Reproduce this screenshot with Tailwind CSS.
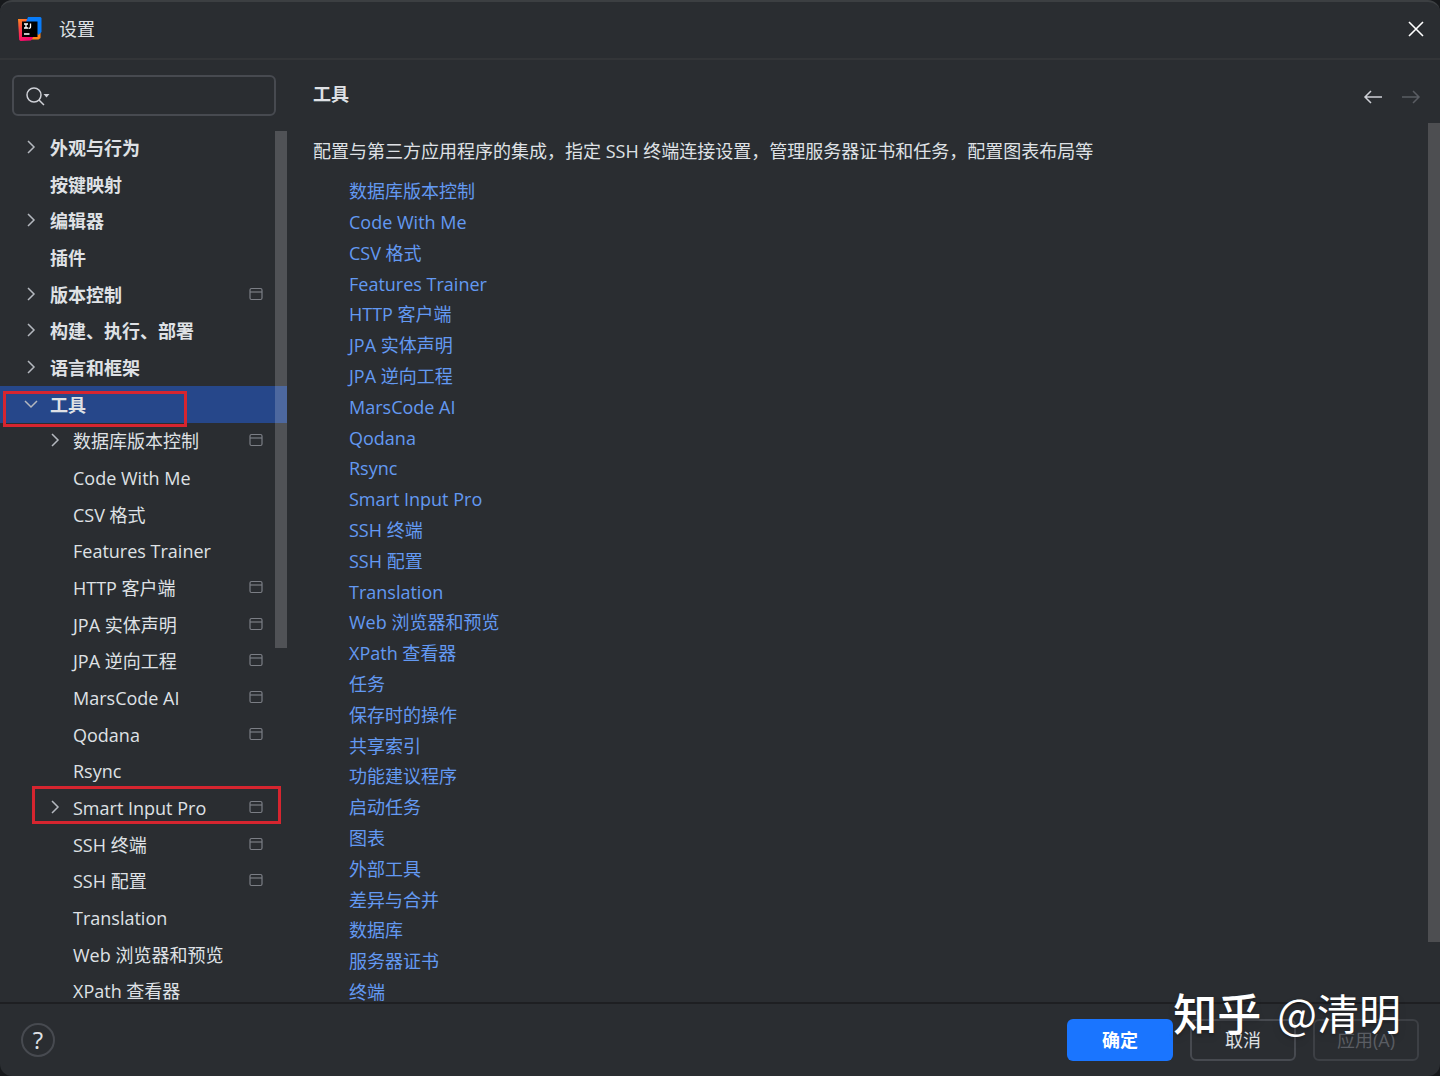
<!DOCTYPE html>
<html lang="zh-CN">
<head>
    <meta charset="UTF-8">
    <meta name="viewport" content="width=device-width, initial-scale=1.0">
    <title>设置</title>
    <script src="https://cdn.jsdelivr.net/npm/@tailwindcss/browser@4"></script>
</head>
<body class="bg-[#17191c]">

    <div class="relative flex flex-col h-screen overflow-hidden rounded-xl border-t-2 border-[#3c3f42] bg-[#2a2d31] text-[#dfe1e5] text-lg font-['Open_Sans','Noto_Sans_CJK_SC',sans-serif]">
        <!-- Title bar -->
        <header class="flex items-center h-[58px] shrink-0 pl-4 pr-[15px] pb-[2px] border-b-2 border-[#333538]">
            <svg class="w-[26px] h-[26px]" viewBox="0 0 26 26">
                <defs>
                    <linearGradient id="warm" x1="0" y1="0" x2="0.4" y2="1">
                        <stop offset="0" stop-color="#ff8a1f"/>
                        <stop offset="0.5" stop-color="#fb3a4c"/>
                        <stop offset="1" stop-color="#f5086b"/>
                    </linearGradient>
                </defs>
                <path d="M15 13h9.500v9l-2 1.500H13z" fill="#ff8318"/>
                <path d="M2 3h9l7 17-3 4.500-10.500.5-1.300-1z" fill="url(#warm)"/>
                <path d="M12 1h12.500l1 1v14l-3 3L10 6z" fill="#087cfa"/>
                <path d="M6 5.500h15.500v15.500H6z" fill="#000"/>
                <path d="M8 8h4M10 8v4M8 12h4M14.500 7.500v3.500q0 1.500-2 1.200M8 18h5.500" fill="none" stroke="#fff" stroke-width="1.300"/>
            </svg>
            <h1 class="ml-[17px] flex-1">设置</h1>
            <button aria-label="关闭" class="p-px">
                <svg class="w-4 h-4" viewBox="0 0 16 16" fill="none" stroke="#fff" stroke-width="1.600"><path d="M1 1l14 14M15 1L1 15"/></svg>
            </button>
        </header>

        <div class="flex flex-1 min-h-0">
            <!-- Sidebar -->
            <aside class="relative flex flex-col w-[287px] shrink-0 pt-[15px]">
                <label class="flex items-center h-[41px] shrink-0 ml-3 mr-[11px] pl-3 border-2 border-[#474a50] rounded-md">
                    <svg class="w-6 h-5 shrink-0" viewBox="0 0 24 20" fill="none" stroke="#ced0d6" stroke-width="1.500">
                        <circle cx="8" cy="9" r="7"/>
                        <path d="M13 14l5 5"/>
                        <path d="M17.500 8h6l-3 3.500z" fill="#ced0d6" stroke="none"/>
                    </svg>
                    <input type="text" aria-label="搜索设置" class="flex-1 min-w-0 outline-none">
                </label>
                <nav class="relative flex-1 min-h-0 mt-[13px] overflow-hidden" aria-label="设置分类">
                    <ul id="tree"></ul>
                    <div class="absolute right-0 top-[2px] w-3 h-[517px] bg-white/18"></div>
                </nav>
            </aside>

            <!-- Main Content -->
            <main class="relative flex flex-col flex-1 min-w-0 pl-[26px]">
                <div class="flex items-center justify-between h-[67px] shrink-0 pr-[19px]">
                    <h2 class="font-bold">工具</h2>
                    <div class="flex gap-[18px] pt-[6px]">
                        <button aria-label="后退">
                            <svg class="w-5 h-5" viewBox="0 0 20 20" fill="none" stroke="#ced0d6" stroke-width="1.500"><path d="M19 10H2M8 4l-6 6 6 6"/></svg>
                        </button>
                        <button aria-label="前进" disabled>
                            <svg class="w-5 h-5" viewBox="0 0 20 20" fill="none" stroke="#5a5d63" stroke-width="1.500"><path d="M1 10h17M12 4l6 6-6 6"/></svg>
                        </button>
                    </div>
                </div>
                <div class="flex-1 min-h-0 overflow-hidden pt-[10px]">
                    <p class="leading-7">配置与第三方应用程序的集成，指定 SSH 终端连接设置，管理服务器证书和任务，配置图表布局等</p>
                    <ul id="links" class="mt-[10px] ml-9 text-[#6399f2]"></ul>
                </div>
                <div class="absolute right-0 top-[63px] bottom-[60px] w-3 bg-[#4d4e51]"></div>
            </main>
        </div>

        <!-- Footer -->
        <footer class="relative flex items-center h-[74px] shrink-0 px-[21px] border-t-2 border-[#1e1f22]">
            <button aria-label="帮助" class="w-[34px] h-[34px] rounded-full border-2 border-[#474a50] flex items-center justify-center text-2xl">?</button>
            <div class="ml-auto flex gap-[17px]">
                <button class="w-[106px] h-[42px] rounded-md bg-[#1a75ff] text-white font-bold">确定</button>
                <button class="w-[106px] h-[42px] rounded-md border-2 border-[#474a50]">取消</button>
                <button disabled class="w-[106px] h-[42px] rounded-md border-2 border-[#3d4045] text-[#5a5d63]">应用(A)</button>
            </div>
            <div class="absolute right-[39px] -top-[22px] flex items-center gap-4 text-[42px] leading-[60px] text-white text-shadow-lg pointer-events-none font-['Noto_Sans_CJK_SC',sans-serif]">
                <span class="font-medium text-[44px]">知乎</span>
                <span>@清明</span>
            </div>
        </footer>
    </div>

    <script>
        // arrow: "right" | "down", project: shows the per-project icon, mark: highlight frame
        const tree = [
            { name: "外观与行为", arrow: "right", top: true },
            { name: "按键映射", top: true },
            { name: "编辑器", arrow: "right", top: true },
            { name: "插件", top: true },
            { name: "版本控制", arrow: "right", top: true, project: true },
            { name: "构建、执行、部署", arrow: "right", top: true },
            { name: "语言和框架", arrow: "right", top: true },
            { name: "工具", arrow: "down", top: true, selected: true, mark: "left-[3px] top-[5px] w-[184px] h-9" },
            { name: "数据库版本控制", arrow: "right", project: true },
            { name: "Code With Me" },
            { name: "CSV 格式" },
            { name: "Features Trainer" },
            { name: "HTTP 客户端", project: true },
            { name: "JPA 实体声明", project: true },
            { name: "JPA 逆向工程", project: true },
            { name: "MarsCode AI", project: true },
            { name: "Qodana", project: true },
            { name: "Rsync" },
            { name: "Smart Input Pro", arrow: "right", project: true, mark: "left-8 -top-[3px] w-[249px] h-[38px]" },
            { name: "SSH 终端", project: true },
            { name: "SSH 配置", project: true },
            { name: "Translation" },
            { name: "Web 浏览器和预览" },
            { name: "XPath 查看器" }
        ];

        const links = [
            "数据库版本控制", "Code With Me", "CSV 格式", "Features Trainer", "HTTP 客户端",
            "JPA 实体声明", "JPA 逆向工程", "MarsCode AI", "Qodana", "Rsync", "Smart Input Pro",
            "SSH 终端", "SSH 配置", "Translation", "Web 浏览器和预览", "XPath 查看器", "任务",
            "保存时的操作", "共享索引", "功能建议程序", "启动任务", "图表", "外部工具",
            "差异与合并", "数据库", "服务器证书", "终端"
        ];

        const arrows = {
            right: `<path d="M4 1l6 6-6 6"/>`,
            down: `<path d="M1 4l6 6 6-6"/>`
        };

        document.getElementById("tree").innerHTML = tree.map(item => `
            <li class="relative h-[37px] nth-[3n]:h-9 ${item.selected ? "bg-[#26478a]" : ""}">
                <a href="#" class="flex items-center h-full pr-6 ${item.top ? "pl-6 font-bold" : "pl-12"}">
                    <svg class="w-[14px] h-[14px] shrink-0 mb-[2px] ${item.top ? "mr-3" : "mr-[11px]"}" viewBox="0 0 14 14" fill="none" stroke="#b4b8bf" stroke-width="1.500">${arrows[item.arrow] || ""}</svg>
                    <span class="flex-1 whitespace-nowrap">${item.name}</span>
                    ${item.project ? `<svg class="w-[14px] h-[14px] shrink-0 mb-[2px]" viewBox="0 0 14 14" fill="none" stroke="#7b7e85" stroke-width="1.200"><rect x="1" y="1.500" width="12" height="11" rx="1.500"/><path d="M1 5h12"/></svg>` : ""}
                </a>
                ${item.mark ? `<div class="absolute z-10 border-3 border-[#d6252f] pointer-events-none ${item.mark}"></div>` : ""}
            </li>
        `).join("");

        document.getElementById("links").innerHTML = links.map(name => `
            <li class="h-[31px] nth-[5n]:h-[30px] flex items-center"><a href="#" class="hover:underline">${name}</a></li>
        `).join("");
    </script>

</body>
</html>
